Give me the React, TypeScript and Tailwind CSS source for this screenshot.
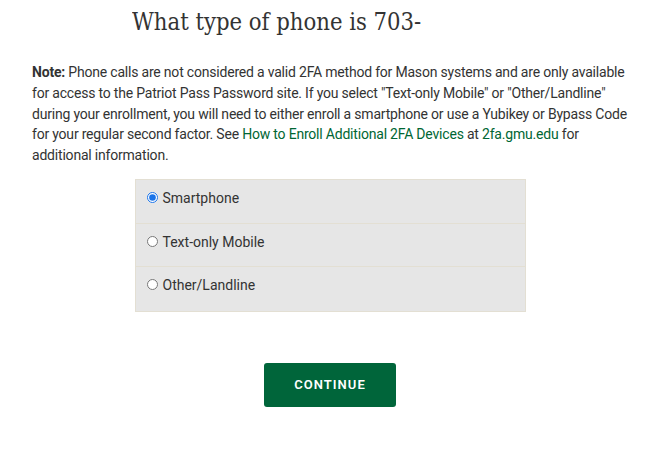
import React, { useState } from "react";

const options = ["Smartphone", "Text-only Mobile", "Other/Landline"];

export default function App() {
  const [choice, setChoice] = useState("Smartphone");

  return (
    <div className="h-[449px] w-[660px] overflow-hidden bg-white font-['Roboto',sans-serif] text-[#333]">
      <div className="ml-[132px] mt-[4px] w-[289px] overflow-hidden whitespace-nowrap font-['DejaVu_Serif',serif] text-[23.6px] font-stretch-condensed leading-[36px] text-[#333]">
        What type of phone is 703-555-0142?
      </div>

      <p className="ml-[32px] mt-[22px] w-[610px] text-[14px] leading-[20.8px] tracking-[-0.2px]">
        <b className="font-bold">Note:</b> Phone calls are not considered a valid 2FA method for Mason systems and are only available
        <br />
        for access to the Patriot Pass Password site. If you select "Text-only Mobile" or "Other/Landline"
        <br />
        during your enrollment, you will need to either enroll a smartphone or use a Yubikey or Bypass Code
        <br />
        for your regular second factor. See{" "}
        <a className="text-[#006633]" href="#">How to Enroll Additional 2FA Devices</a> at{" "}
        <a className="text-[#006633]" href="#">2fa.gmu.edu</a> for
        <br />
        additional information.
      </p>

      <div className="mx-auto mt-[13px] w-[391px] border border-[#e3dfd3] bg-[#e6e6e6] pb-[2px]">
        {options.map((o, i) => (
          <label
            key={o}
            className={`flex h-[43px] items-start gap-[5px] px-[11px] pt-[8px] text-[14px] leading-[20px] ${i > 0 ? "border-t border-[#e3dfd3]" : ""}`}
          >
            <input
              type="radio"
              name="phone"
              checked={choice === o}
              onChange={() => setChoice(o)}
              className="mt-[4px] h-[11px] w-[11px] accent-[#1a73e8]"
            />
            {o}
          </label>
        ))}
      </div>

      <div className="mt-[51px] flex justify-center">
        <button className="h-[44px] w-[132px] rounded-[3px] bg-[#00653a] text-[13px] font-semibold tracking-[0.08em] text-white">
          CONTINUE
        </button>
      </div>
    </div>
  );
}
